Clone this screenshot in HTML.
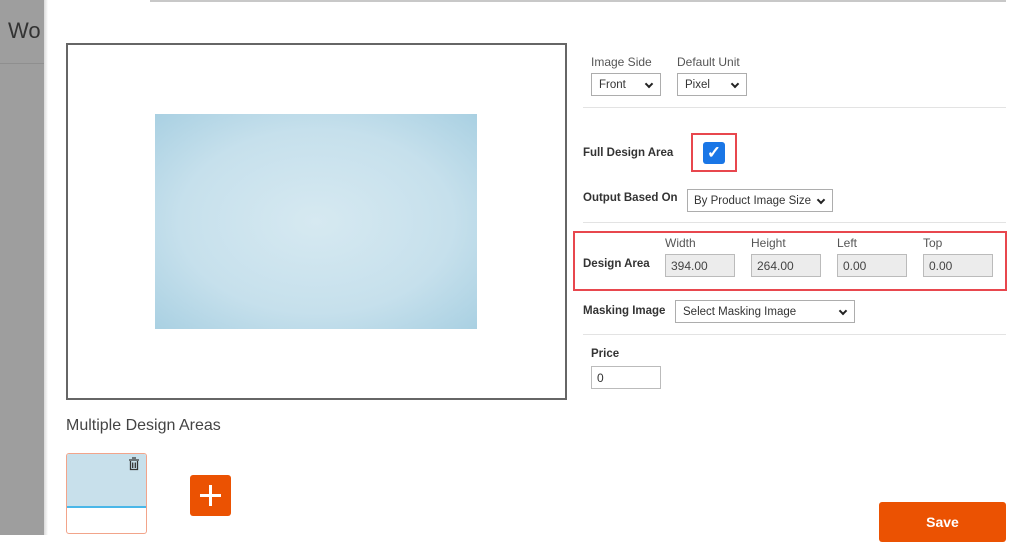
<!DOCTYPE html>
<html><head><style>
*{box-sizing:border-box;margin:0;padding:0}
body{width:1024px;height:535px;overflow:hidden;background:#fff;font-family:"Liberation Sans",sans-serif;position:relative;color:#333}
.a{position:absolute}
.lbl{font-size:12px;color:#555}
.b{font-size:11.5px;font-weight:bold;color:#333}
.sel{position:absolute;border:1px solid #adadad;background:#fff;font-size:11.5px;color:#333;padding:0 7px;height:23px;line-height:22px}
.sel:after{content:"";position:absolute;right:8px;top:7px;width:4px;height:4px;border-right:2px solid #222;border-bottom:2px solid #222;transform:rotate(45deg)}
.inp{position:absolute;border:1px solid #bbb;background:#ececec;font-size:12px;color:#444;padding:4px 5px;height:23px;width:70px}
.hr{position:absolute;left:583px;width:423px;height:1px;background:#e3e3e3}
</style></head><body>
<div class="a" style="left:0;top:0;width:44px;height:535px;background:#9e9e9e"></div>
<div class="a" style="left:0;top:63px;width:44px;height:1px;background:#8f8f8f"></div>
<div class="a" style="left:8px;top:18px;font-size:22px;color:#333">Wo</div>
<div class="a" style="left:44px;top:0;width:4px;height:535px;background:linear-gradient(90deg,rgba(0,0,0,.15),rgba(0,0,0,0))"></div>
<div class="a" style="left:150px;top:0;width:856px;height:2px;background:#c8c8c8"></div>

<div class="a" style="left:66px;top:43px;width:501px;height:357px;border:2px solid #666"></div>
<div class="a" style="left:155px;top:114px;width:322px;height:215px;background:radial-gradient(ellipse at center,#d6e9f1 0%,#c6e0ec 60%,#a9d0e2 100%)"></div>

<div class="a" style="left:66px;top:417px;font-size:16px;color:#444">Multiple Design Areas</div>
<div class="a" style="left:66px;top:453px;width:81px;height:81px;border:1px solid #f2a48a;border-radius:3px;overflow:hidden">
<div style="height:54px;background:#c8e0eb;border-bottom:2px solid #4ab7e8"></div></div>
<svg class="a" style="left:128px;top:457px" width="12" height="14" viewBox="0 0 12 14"><path d="M4 1h4M1 3h10M2.5 4v8.5h7V4M4.7 5.5v5.5M7.3 5.5v5.5" stroke="#333" stroke-width="1.3" fill="none"/></svg>
<div class="a" style="left:190px;top:475px;width:41px;height:41px;background:#eb5202;border-radius:3px"></div>
<div class="a" style="left:200px;top:494px;width:21px;height:3px;background:#fff"></div>
<div class="a" style="left:209px;top:485px;width:3px;height:21px;background:#fff"></div>

<div class="a lbl" style="left:591px;top:55px">Image Side</div>
<div class="a lbl" style="left:677px;top:55px">Default Unit</div>
<div class="sel" style="left:591px;top:73px;width:70px">Front</div>
<div class="sel" style="left:677px;top:73px;width:70px">Pixel</div>
<div class="hr" style="top:107px"></div>
<div class="a b" style="left:583px;top:147px">Full Design Area</div>
<div class="a" style="left:691px;top:133px;width:46px;height:39px;border:2px solid #e8474e"></div>
<div class="a" style="left:703px;top:142px;width:22px;height:22px;background:#1976e6;border-radius:3px;color:#fff;font-size:17px;font-weight:bold;text-align:center;line-height:22px">✓</div>
<div class="a b" style="left:583px;top:192px">Output Based On</div>
<div class="sel" style="left:687px;top:189px;width:146px;padding-left:6px">By Product Image Size</div>
<div class="hr" style="top:222px"></div>
<div class="a" style="left:573px;top:231px;width:434px;height:60px;border:2px solid #e8474e"></div>
<div class="a lbl" style="left:665px;top:236px">Width</div>
<div class="a lbl" style="left:751px;top:236px">Height</div>
<div class="a lbl" style="left:837px;top:236px">Left</div>
<div class="a lbl" style="left:923px;top:236px">Top</div>
<div class="a b" style="left:583px;top:258px">Design Area</div>
<div class="inp" style="left:665px;top:254px">394.00</div>
<div class="inp" style="left:751px;top:254px">264.00</div>
<div class="inp" style="left:837px;top:254px">0.00</div>
<div class="inp" style="left:923px;top:254px">0.00</div>
<div class="a b" style="left:583px;top:305px">Masking Image</div>
<div class="sel" style="left:675px;top:300px;width:180px">Select Masking Image</div>
<div class="hr" style="top:334px"></div>
<div class="a b" style="left:591px;top:348px">Price</div>
<div class="a" style="left:591px;top:366px;width:70px;height:23px;border:1px solid #bbb;font-size:12px;padding:4px 5px">0</div>
<div class="a" style="left:879px;top:502px;width:127px;height:40px;background:#eb5202;border-radius:3px;color:#fff;font-size:14px;font-weight:bold;text-align:center;line-height:40px">Save</div>
</body></html>
